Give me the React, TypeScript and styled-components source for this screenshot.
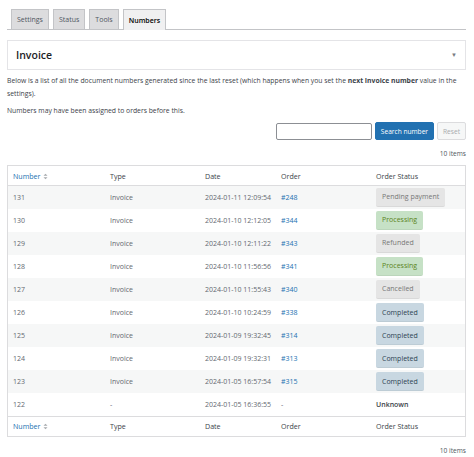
import { createGlobalStyle } from "styled-components";
import styled from "styled-components";

const GlobalStyle = createGlobalStyle`
    body {
        margin: 0;
        background: #ffffff;
        font-family: "Open Sans", "Noto Sans", sans-serif;
        color: #3c434a;
    }
`;

const Page = styled.div`
    width: 474px;
    padding: 9px 8px 0 7px;
    box-sizing: border-box;
    font-size: 7px;
`;

const TabBar = styled.div`
    display: flex;
    gap: 4px;
    padding-left: 4px;
    border-bottom: 1px solid #c3c4c7;
    height: 20px;
`;

const Tab = styled.div<{ $active?: boolean }>`
    display: flex;
    align-items: center;
    padding: 0 5px;
    box-sizing: border-box;
    border: 1px solid #c3c4c7;
    border-bottom: none;
    background: ${(p) => (p.$active ? "#f0f0f1" : "#dcdcde")};
    color: ${(p) => (p.$active ? "#000" : "#50575e")};
    font-weight: ${(p) => (p.$active ? 600 : 400)};
    font-size: 7px;
    margin-bottom: ${(p) => (p.$active ? "-1px" : "0")};
    height: ${(p) => (p.$active ? "21px" : "20px")};
`;

const Accordion = styled.div`
    margin-top: 10px;
    height: 30px;
    border: 1px solid #e4e4e7;
    box-sizing: border-box;
    display: flex;
    align-items: center;
    justify-content: space-between;
    padding: 0 8px;
`;

const AccordionTitle = styled.span`
    font-size: 10.5px;
    font-weight: 600;
    color: #1d2327;
`;

const Caret = styled.span`
    font-size: 6px;
    color: #787c82;
`;

const Para = styled.p<{ $gap: number }>`
    margin: ${(p) => p.$gap}px 0 0;
    line-height: 13px;
    font-size: 6.8px;
    color: #3c434a;
`;

const SearchRow = styled.div`
    display: flex;
    justify-content: flex-end;
    align-items: center;
    gap: 3px;
    margin-top: 5px;
    height: 18px;
`;

const SearchInput = styled.input`
    width: 96px;
    height: 17px;
    box-sizing: border-box;
    border: 1px solid #8c8f94;
    border-radius: 2px;
    background: #fff;
`;

const Button = styled.button<{ $primary?: boolean }>`
    height: 18px;
    box-sizing: border-box;
    padding: 0 5px;
    font-family: inherit;
    font-size: 6.6px;
    border-radius: 2px;
    border: 1px solid ${(p) => (p.$primary ? "#2271b1" : "#dcdcde")};
    background: ${(p) => (p.$primary ? "#2271b1" : "#f6f7f7")};
    color: ${(p) => (p.$primary ? "#fff" : "#a7aaad")};
`;

const ItemCount = styled.div<{ $gap: number }>`
    text-align: right;
    color: #50575e;
    font-size: 6.6px;
    line-height: 10px;
    margin-top: ${(p) => p.$gap}px;
`;

const Table = styled.table`
    width: 100%;
    border-collapse: collapse;
    border: 1px solid #dcdcde;
    margin-top: 6px;
    table-layout: fixed;
`;

const HeadCell = styled.th<{ $sortable?: boolean }>`
    text-align: left;
    font-weight: 400;
    height: 19px;
    padding: 0 5px;
    white-space: nowrap;
    color: ${(p) => (p.$sortable ? "#2271b1" : "#3c434a")};
    font-size: 7.1px;
`;

const HeadRow = styled.tr<{ $foot?: boolean }>`
    ${(p) => (p.$foot ? "border-top: 1px solid #dcdcde;" : "border-bottom: 1px solid #dcdcde;")}
`;

const Row = styled.tr<{ $alt: boolean }>`
    background: ${(p) => (p.$alt ? "#f6f7f7" : "#fff")};
    height: 23.1px;
`;

const Cell = styled.td`
    padding: 0 5px;
    vertical-align: middle;
    white-space: nowrap;
    color: #646970;
`;

const OrderLink = styled.a`
    color: #2271b1;
    text-decoration: none;
`;

const badgeColors: Record<string, [string, string]> = {
    pending: ["#e5e5e5", "#777"],
    processing: ["#c6e1c6", "#5b841b"],
    refunded: ["#e5e5e5", "#777"],
    cancelled: ["#e5e5e5", "#777"],
    completed: ["#c8d7e1", "#2e4453"],
};

const Badge = styled.span<{ $kind: string }>`
    display: inline-flex;
    align-items: center;
    height: 18px;
    padding: 0 6px;
    border-radius: 2px;
    background: ${(p) => badgeColors[p.$kind][0]};
    color: ${(p) => badgeColors[p.$kind][1]};
    border-bottom: 1px solid rgba(0, 0, 0, 0.05);
`;

const Unknown = styled.span`
    font-weight: 600;
    color: #3c434a;
`;

const SortIcon = () => (
    <svg width="5" height="7" viewBox="0 0 10 14" style={{ marginLeft: 3, verticalAlign: "-1px" }}>
        <path d="M1 5.5L5 1.5L9 5.5Z M1 8.5L5 12.5L9 8.5Z" fill="#a7aaad" />
    </svg>
);

type Entry = {
    num: number;
    type: string;
    date: string;
    order: string;
    status: string;
    label: string;
};

const rows: Entry[] = [
    { num: 131, type: "Invoice", date: "2024-01-11 12:09:54", order: "#248", status: "pending", label: "Pending payment" },
    { num: 130, type: "Invoice", date: "2024-01-10 12:12:05", order: "#344", status: "processing", label: "Processing" },
    { num: 129, type: "Invoice", date: "2024-01-10 12:11:22", order: "#343", status: "refunded", label: "Refunded" },
    { num: 128, type: "Invoice", date: "2024-01-10 11:56:56", order: "#341", status: "processing", label: "Processing" },
    { num: 127, type: "Invoice", date: "2024-01-10 11:55:43", order: "#340", status: "cancelled", label: "Cancelled" },
    { num: 126, type: "Invoice", date: "2024-01-10 10:24:59", order: "#338", status: "completed", label: "Completed" },
    { num: 125, type: "Invoice", date: "2024-01-09 19:32:45", order: "#314", status: "completed", label: "Completed" },
    { num: 124, type: "Invoice", date: "2024-01-09 19:32:31", order: "#313", status: "completed", label: "Completed" },
    { num: 123, type: "Invoice", date: "2024-01-05 16:57:54", order: "#315", status: "completed", label: "Completed" },
    { num: 122, type: "-", date: "2024-01-05 16:36:55", order: "-", status: "unknown", label: "Unknown" },
];

function HeaderCells() {
    return (
        <>
            <HeadCell $sortable style={{ width: 87 }}>Number<SortIcon /></HeadCell>
            <HeadCell style={{ width: 85 }}>Type</HeadCell>
            <HeadCell style={{ width: 66 }}>Date</HeadCell>
            <HeadCell style={{ width: 85 }}>Order</HeadCell>
            <HeadCell>Order Status</HeadCell>
        </>
    );
}

export default function App() {
    return (
        <Page>
            <GlobalStyle />
            <TabBar>
                <Tab>Settings</Tab>
                <Tab>Status</Tab>
                <Tab>Tools</Tab>
                <Tab $active>Numbers</Tab>
            </TabBar>
            <Accordion>
                <AccordionTitle>Invoice</AccordionTitle>
                <Caret>▼</Caret>
            </Accordion>
            <Para $gap={4}>
                Below is a list of all the document numbers generated since the last reset (which happens when you set the <strong>next Invoice number</strong> value in the
                <br />
                settings).
            </Para>
            <Para $gap={4}>Numbers may have been assigned to orders before this.</Para>
            <SearchRow>
                <SearchInput type="text" />
                <Button $primary>Search number</Button>
                <Button>Reset</Button>
            </SearchRow>
            <ItemCount $gap={9}>10 items</ItemCount>
            <Table>
                <thead>
                    <HeadRow><HeaderCells /></HeadRow>
                </thead>
                <tbody>
                    {rows.map((r, i) => (
                        <Row key={r.num} $alt={i % 2 === 0}>
                            <Cell>{r.num}</Cell>
                            <Cell>{r.type}</Cell>
                            <Cell>{r.date}</Cell>
                            <Cell>{r.order === "-" ? "-" : <OrderLink href="#">{r.order}</OrderLink>}</Cell>
                            <Cell>
                                {r.status === "unknown" ? <Unknown>{r.label}</Unknown> : <Badge $kind={r.status}>{r.label}</Badge>}
                            </Cell>
                        </Row>
                    ))}
                </tbody>
                <tfoot>
                    <HeadRow $foot><HeaderCells /></HeadRow>
                </tfoot>
            </Table>
            <ItemCount $gap={9}>10 items</ItemCount>
        </Page>
    );
}
